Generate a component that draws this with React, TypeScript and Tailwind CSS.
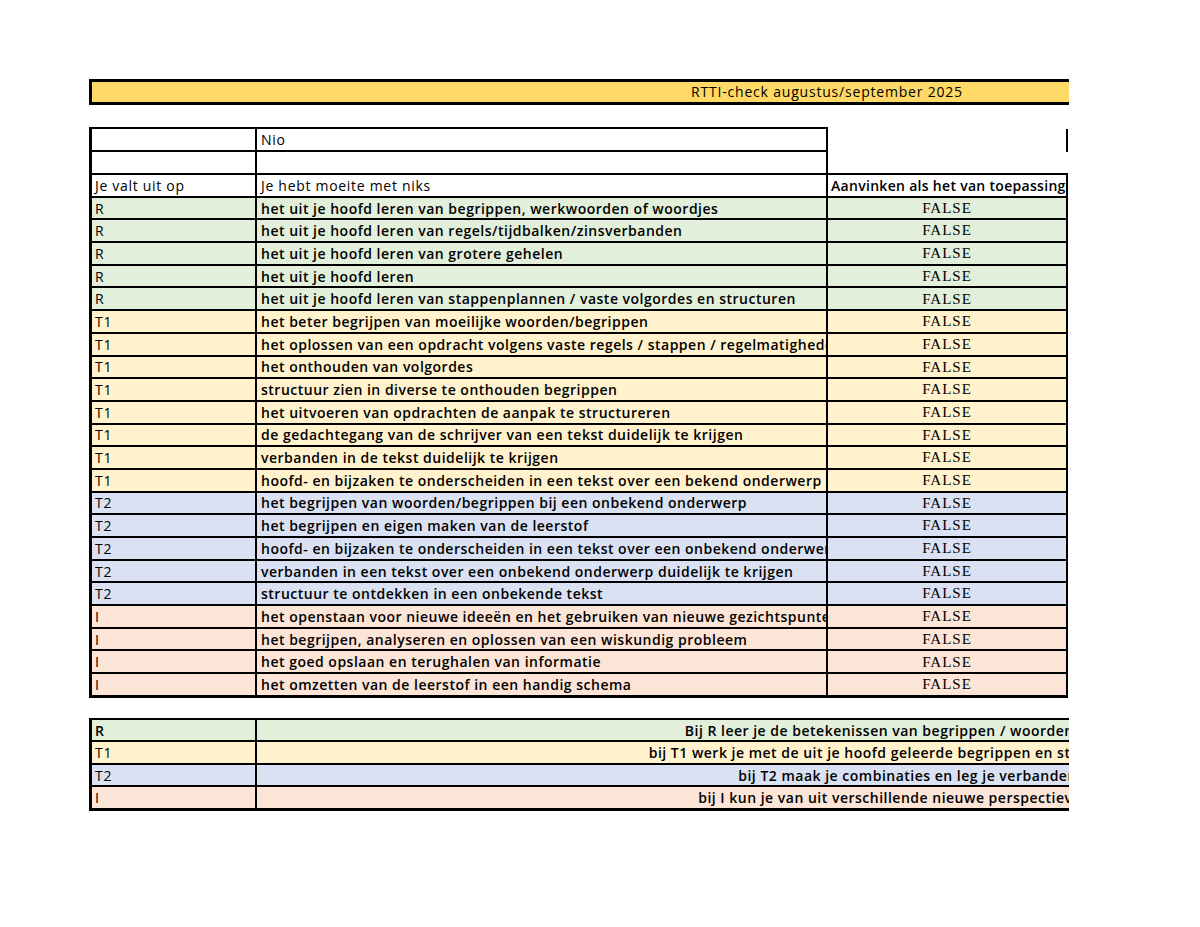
import React from "react";

type Row = { cat: string; text: string; bg: string };

const G = "bg-[#e2efda]";
const Y = "bg-[#fff2cc]";
const B = "bg-[#d9e1f2]";
const P = "bg-[#fce4d6]";

const rows: Row[] = [
  { cat: "R", bg: G, text: "het uit je hoofd leren van begrippen, werkwoorden of woordjes" },
  { cat: "R", bg: G, text: "het uit je hoofd leren van regels/tijdbalken/zinsverbanden" },
  { cat: "R", bg: G, text: "het uit je hoofd leren van grotere gehelen" },
  { cat: "R", bg: G, text: "het uit je hoofd leren" },
  { cat: "R", bg: G, text: "het uit je hoofd leren van stappenplannen / vaste volgordes en structuren" },
  { cat: "T1", bg: Y, text: "het beter begrijpen van moeilijke woorden/begrippen" },
  { cat: "T1", bg: Y, text: "het oplossen van een opdracht volgens vaste regels / stappen / regelmatigheden" },
  { cat: "T1", bg: Y, text: "het onthouden van volgordes" },
  { cat: "T1", bg: Y, text: "structuur zien in diverse te onthouden begrippen" },
  { cat: "T1", bg: Y, text: "het uitvoeren van opdrachten de aanpak te structureren" },
  { cat: "T1", bg: Y, text: "de gedachtegang van de schrijver van een tekst duidelijk te krijgen" },
  { cat: "T1", bg: Y, text: "verbanden in de tekst duidelijk te krijgen" },
  { cat: "T1", bg: Y, text: "hoofd- en bijzaken te onderscheiden in een tekst over een bekend onderwerp" },
  { cat: "T2", bg: B, text: "het begrijpen van woorden/begrippen bij een onbekend onderwerp" },
  { cat: "T2", bg: B, text: "het begrijpen en eigen maken van de leerstof" },
  { cat: "T2", bg: B, text: "hoofd- en bijzaken te onderscheiden in een tekst over een onbekend onderwerp" },
  { cat: "T2", bg: B, text: "verbanden in een tekst over een onbekend onderwerp duidelijk te krijgen" },
  { cat: "T2", bg: B, text: "structuur te ontdekken in een onbekende tekst" },
  { cat: "I", bg: P, text: "het openstaan voor nieuwe ideeën en het gebruiken van nieuwe gezichtspunten" },
  { cat: "I", bg: P, text: "het begrijpen, analyseren en oplossen van een wiskundig probleem" },
  { cat: "I", bg: P, text: "het goed opslaan en terughalen van informatie" },
  { cat: "I", bg: P, text: "het omzetten van de leerstof in een handig schema" },
];

const legend: { cat: string; text: string; bg: string; bold?: boolean }[] = [
  { cat: "R", bg: G, bold: true, text: "Bij R leer je de betekenissen van begrippen / woorden uit jou." },
  { cat: "T1", bg: Y, text: "bij T1 werk je met de uit je hoofd geleerde begrippen en stappen u" },
  { cat: "T2", bg: B, text: "bij T2 maak je combinaties en leg je verbanden tussen" },
  { cat: "I", bg: P, text: "bij I kun je van uit verschillende nieuwe perspectieven kijke" },
];

const font = "font-['Open_Sans',sans-serif]";

export default function App() {
  return (
    <div className={`min-h-screen bg-white pt-[79px] text-black ${font}`}>
      <div className="ml-[89px] w-[980px] overflow-hidden">
        {/* Title bar */}
        <div className="w-[1476px] h-[26px] border-[3px] border-black bg-[#ffd966] flex items-center justify-center text-[14px] tracking-[0.8px] leading-none font-medium">
          RTTI-check augustus/september 2025
        </div>

        {/* Main table */}
        <div className="mt-[22px] w-[979px]">
          {/* top part: rows 1-2 */}
          <div className="flex">
            <div className="grid grid-cols-[163px_569px] gap-[2px] bg-black pl-[3px] pt-[2px] pr-[2px] text-[14px] tracking-[0.7px]">
              <div className="h-[21px] bg-white" />
              <div className="h-[21px] bg-white flex items-center px-[4px]">Nio</div>
              <div className="h-[21px] bg-white" />
              <div className="h-[21px] bg-white" />
            </div>
            <div className="flex-1 flex justify-end items-start">
              <div className="w-[2px] h-[23px] mt-[2px] bg-black" />
            </div>
          </div>

          {/* header row + data rows */}
          <div className="grid grid-cols-[163px_569px_238px] gap-[2px] bg-black pl-[3px] pt-[2px] pr-[2px] pb-[3px] text-[14px]">
            <div className="h-[20.7px] bg-white flex items-center px-[3px] whitespace-nowrap overflow-hidden tracking-[0.7px]">Je valt uit op</div>
            <div className="h-[20.7px] bg-white flex items-center px-[4px] whitespace-nowrap overflow-hidden tracking-[0.7px]">Je hebt moeite met niks</div>
            <div className="h-[20.7px] bg-white flex items-center px-[3px] whitespace-nowrap overflow-hidden font-semibold tracking-[0.3px]">Aanvinken als het van toepassing is</div>
            {rows.map((r, i) => (
              <React.Fragment key={i}>
                <div className={`h-[20.7px] ${r.bg} flex items-center px-[3px] whitespace-nowrap overflow-hidden tracking-[0.7px]`}>{r.cat}</div>
                <div className={`h-[20.7px] ${r.bg} flex items-center px-[4px] whitespace-nowrap overflow-hidden font-semibold tracking-[0.5px]`}>{r.text}</div>
                <div className={`h-[20.7px] ${r.bg} flex items-center justify-center font-['Liberation_Serif',serif] text-[15px] tracking-[1px]`}>FALSE</div>
              </React.Fragment>
            ))}
          </div>
        </div>

        {/* Legend table */}
        <div className="mt-[20px] w-[1100px] grid grid-cols-[163px_872px] gap-[2px] bg-black pl-[3px] pt-[2px] pb-[3px] text-[14px]">
          {legend.map((l, i) => (
            <React.Fragment key={i}>
              <div className={`h-[20.5px] ${l.bg} flex items-center px-[3px] tracking-[0.7px] ${l.bold ? "font-semibold" : ""}`}>{l.cat}</div>
              <div className={`h-[20.5px] ${l.bg} flex items-center justify-end whitespace-nowrap overflow-hidden font-semibold tracking-[0.5px]`}>{l.text}</div>
            </React.Fragment>
          ))}
        </div>
      </div>
    </div>
  );
}
